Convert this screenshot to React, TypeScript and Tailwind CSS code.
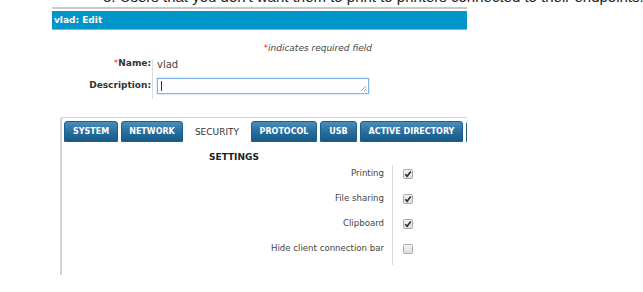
import React from "react";

const tabs = [
  { label: "SYSTEM", w: "w-[54px]", active: false },
  { label: "NETWORK", w: "w-[62px]", active: false },
  { label: "SECURITY", w: "w-[62px]", active: true },
  { label: "PROTOCOL", w: "w-[66px]", active: false },
  { label: "USB", w: "w-[37px]", active: false },
  { label: "ACTIVE DIRECTORY", w: "w-[103px]", active: false },
  { label: "", w: "w-[30px]", active: false },
];

const rows = [
  { label: "Printing", checked: true },
  { label: "File sharing", checked: true },
  { label: "Clipboard", checked: true },
  { label: "Hide client connection bar", checked: false },
];

function Check({ checked }: { checked: boolean }) {
  return (
    <svg width="10" height="10" viewBox="0 0 10 10">
      <defs>
        <linearGradient id="cbg" x1="0" y1="0" x2="0" y2="1">
          <stop offset="0" stopColor="#f4f4f4" />
          <stop offset="1" stopColor="#dcdcdc" />
        </linearGradient>
      </defs>
      <rect x="0.5" y="0.5" width="9" height="9" rx="1" fill="url(#cbg)" stroke="#a9a9a9" />
      {checked && (
        <path d="M2.3 5.2 L4.1 7.2 L7.8 2.6" fill="none" stroke="#2b2b2b" strokeWidth="1.6" />
      )}
    </svg>
  );
}

export default function App() {
  const verdana = { fontFamily: '"DejaVu Sans", Verdana, sans-serif' };
  return (
    <div className="w-[643px] h-[292px] bg-white overflow-hidden relative" style={verdana}>
      {/* clipped line of document text */}
      <div className="h-[6px] overflow-hidden pl-[103px]">
        <div
          className="mt-[-11px] text-[15px] leading-[16px] text-[#222] whitespace-nowrap"
          style={{ fontFamily: '"Liberation Sans", Arial, sans-serif' }}
        >
          3. Users that you don't want them to print to printers connected to their endpoints.
        </div>
      </div>

      <div className="ml-[52px] w-[415px]">
        <div className="mt-[1px] h-[2px] bg-[#c9c9c9]" />
        <div className="mt-[2px] h-[19px] bg-[#0096c9] border-b border-[#6cc0e0] flex items-center pl-[2px]">
          <span className="text-white font-bold text-[9px] leading-none" style={verdana}>
            vlad: Edit
          </span>
        </div>
      </div>

      {/* form */}
      <div className="mt-[13px] flex">
        <div className="w-[372px] text-right text-[9px] italic text-[#444] leading-[11px]">
          <span className="text-[#e33]">*</span>indicates required field
        </div>
      </div>
      <div className="flex mt-[-1px]">
        <div className="w-[151px] flex flex-col items-end text-[9px] font-bold text-[#333]">
          <div className="h-[22px] flex items-center">
            <span className="text-[#e33] font-normal">*</span>Name:
          </div>
          <div className="h-[22px] flex items-center">Description:</div>
        </div>
        <div className="w-[1px] mx-[1px] mt-[6px] bg-[#dcdcdc] h-[40px]" />
        <div className="flex flex-col pl-[3px]">
          <div className="h-[22px] flex items-center text-[10px] text-[#444]">vlad</div>
          <div className="h-[22px] flex items-center">
            <div className="relative w-[212px] h-[16px] border border-[#7fb2e6] bg-white shadow-[0_0_2px_#a9cdf2]">
              <div className="absolute left-[3px] top-[2px] w-[1px] h-[10px] bg-[#333]" />
              <svg className="absolute right-[1px] bottom-[1px]" width="7" height="7" viewBox="0 0 7 7">
                <path d="M6 1 L1 6 M6 4 L4 6" stroke="#888" strokeWidth="0.8" />
              </svg>
            </div>
          </div>
        </div>
      </div>

      {/* tab panel */}
      <div className="ml-[60px] mt-[18px] w-[407px] h-[158px] border-l-2 border-t border-[#d4d4d4] rounded-tl-[3px] pl-[2px] overflow-hidden">
        <div className="mt-[3px] flex gap-[3px] items-end overflow-hidden w-[403px] h-[21px]">
          {tabs.map((t, i) =>
            t.active ? (
              <div
                key={i}
                className={`${t.w} shrink-0 h-[21px] bg-white rounded-t-[3px] flex items-center justify-center text-[9px] text-[#333] pt-[2px]`}
              >
                {t.label}
              </div>
            ) : (
              <div
                key={i}
                className={`${t.w} shrink-0 h-[21px] rounded-t-[3px] border border-[#1d5f8c] bg-gradient-to-b from-[#4a8dba] via-[#286f9f] to-[#175986] flex items-center justify-center text-[8px] font-bold text-white pt-[1px]`}
              >
                {t.label}
              </div>
            )
          )}
        </div>
        <div className="pl-[145px] mt-[10px] text-[9px] font-bold text-[#222] leading-[11px]">SETTINGS</div>
        <div className="flex items-start mt-[2px]">
          <div className="w-[320px] flex flex-col items-end mt-[-4px]">
            {rows.map((r) => (
              <div key={r.label} className="h-[25px] flex items-center text-[8.6px] text-[#444]">
                {r.label}
              </div>
            ))}
          </div>
          <div className="ml-[8px] w-[1px] h-[100px] bg-[#d8d8d8]" />
          <div className="ml-[10px] flex flex-col mt-[-4px]">
            {rows.map((r) => (
              <div key={r.label} className="h-[25px] flex items-center">
                <Check checked={r.checked} />
              </div>
            ))}
          </div>
        </div>
      </div>
    </div>
  );
}
